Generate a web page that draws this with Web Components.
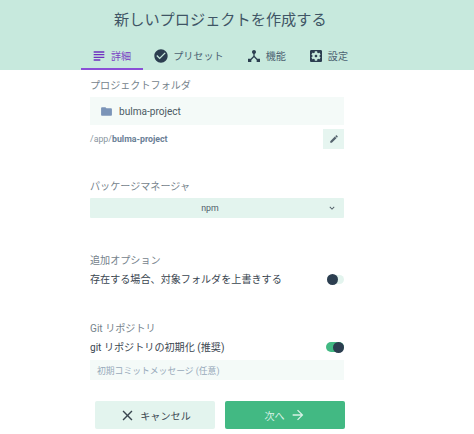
<!DOCTYPE html>
<html lang="ja">
<head>
<meta charset="utf-8">
<title>新しいプロジェクトを作成する</title>
<style>
  html, body { margin: 0; padding: 0; background: #fff; }
  body { font-family: Roboto, "Noto Sans CJK JP", sans-serif; color: #2c3e50; height: 434px; overflow: hidden; }
</style>
</head>
<body>
<create-view></create-view>
<script>
const ICONS = {
  subject: '<path d="M14 17H4v2h10v-2zm6-8H4v2h16V9zM4 15h16v-2H4v2zM4 5v2h16V5H4z"/>',
  check: '<path d="M12 2C6.48 2 2 6.48 2 12s4.48 10 10 10 10-4.48 10-10S17.52 2 12 2zm-2 15l-5-5 1.41-1.41L10 14.17l7.59-7.59L19 8l-9 9z"/>',
  tree: '<path d="M17 16l-4-4V8.82C14.16 8.4 15 7.3 15 6c0-1.66-1.34-3-3-3S9 4.34 9 6c0 1.3.84 2.4 2 2.82V12l-4 4H3v5h5v-3.05l4-4.2 4 4.2V21h5v-5h-4z"/>',
  settings: '<path d="M12 10c-1.1 0-2 .9-2 2s.9 2 2 2 2-.9 2-2-.9-2-2-2zm7-7H5c-1.11 0-2 .9-2 2v14c0 1.1.89 2 2 2h14c1.11 0 2-.9 2-2V5c0-1.1-.89-2-2-2zm-1.75 9c0 .23-.02.46-.05.68l1.48 1.16c.13.11.17.3.08.45l-1.4 2.42c-.09.15-.27.21-.43.15l-1.74-.7c-.36.28-.76.51-1.18.69l-.26 1.85c-.03.17-.18.3-.35.3h-2.8c-.17 0-.32-.13-.35-.29l-.26-1.85c-.43-.18-.82-.41-1.18-.69l-1.74.7c-.16.06-.34 0-.43-.15l-1.4-2.42c-.09-.15-.05-.34.08-.45l1.48-1.16c-.03-.23-.05-.46-.05-.69 0-.23.02-.46.05-.68l-1.48-1.16c-.13-.11-.17-.3-.08-.45l1.4-2.42c.09-.15.27-.21.43-.15l1.74.7c.36-.28.76-.51 1.18-.69l.26-1.85c.03-.17.18-.3.35-.3h2.8c.17 0 .32.13.35.29l.26 1.85c.43.18.82.41 1.18.69l1.74-.7c.16-.06.34 0 .43.15l1.4 2.42c.09.15.05.34-.08.45l-1.48 1.16c.03.23.05.46.05.69z"/>',
  folder: '<path d="M10 4H4c-1.1 0-2 .9-2 2v12c0 1.1.9 2 2 2h16c1.1 0 2-.9 2-2V8c0-1.1-.9-2-2-2h-8l-2-2z"/>',
  edit: '<path d="M3 17.25V21h3.75L17.81 9.94l-3.75-3.75L3 17.25zM20.71 7.04a1 1 0 0 0 0-1.41l-2.34-2.34a1 1 0 0 0-1.41 0l-1.83 1.83 3.75 3.75 1.83-1.83z"/>',
  chevron: '<path d="M7.41 8.59L12 13.17l4.59-4.58L18 10l-6 6-6-6z"/>',
  close: '<path d="M19 6.41L17.59 5 12 10.59 6.41 5 5 6.41 10.59 12 5 17.59 6.41 19 12 13.41 17.59 19 19 17.59 13.41 12z"/>',
  arrow: '<path d="M12 4l-1.41 1.41L16.17 11H4v2h12.17l-5.58 5.59L12 20l8-8z"/>'
};

class VIcon extends HTMLElement {
  connectedCallback() {
    const size = this.getAttribute('size') || 16;
    this.attachShadow({ mode: 'open' });
    this.shadowRoot.innerHTML = `
      <style>
        :host { display: inline-flex; flex: none; width: ${size}px; height: ${size}px; }
        svg { width: 100%; height: 100%; fill: currentColor; display: block; }
      </style>
      <svg viewBox="0 0 24 24">${ICONS[this.getAttribute('name')]}</svg>`;
  }
}
customElements.define('v-icon', VIcon);

class VTab extends HTMLElement {
  constructor() {
    super();
    this.attachShadow({ mode: 'open' });
    this.shadowRoot.innerHTML = `
      <style>
        :host {
          display: flex; align-items: center; gap: 4px;
          height: 30px; padding: 3px 12px 0 10px; box-sizing: border-box;
          font-size: 10.1px; color: #4c6272; white-space: nowrap;
          border-bottom: 2px solid transparent;
        }
        :host([selected]) { color: #7b3fc4; border-bottom-color: #8a4fd6; }
        ::slotted(v-icon) { color: #2c3e50; }
        :host([selected]) ::slotted(v-icon) { color: #6f2fc0; }
      </style>
      <slot></slot>`;
  }
}
customElements.define('v-tab', VTab);

class VHeader extends HTMLElement {
  constructor() {
    super();
    this.attachShadow({ mode: 'open' });
    this.shadowRoot.innerHTML = `
      <style>
        :host { display: block; height: 70px; background: #c7e9dd; box-sizing: border-box; }
        h1 { margin: 0; padding: 10px 0 0 114px; height: 40px; box-sizing: border-box; font-size: 15.2px; line-height: 20px; font-weight: 400; color: #3f5565; white-space: nowrap; }
        nav { display: flex; padding-left: 81px; }
      </style>
      <h1>新しいプロジェクトを作成する</h1>
      <nav><slot></slot></nav>`;
  }
}
customElements.define('v-header', VHeader);

class VField extends HTMLElement {
  constructor() {
    super();
    this.attachShadow({ mode: 'open' });
    this.shadowRoot.innerHTML = `
      <style>
        :host { display: block; }
        label { display: block; font-size: 10.1px; line-height: 16px; color: #76838c; white-space: nowrap; }
      </style>
      <label></label>
      <slot></slot>`;
  }
  connectedCallback() {
    this.shadowRoot.querySelector('label').textContent = this.getAttribute('label');
  }
}
customElements.define('v-field', VField);

class VInput extends HTMLElement {
  constructor() {
    super();
    this.attachShadow({ mode: 'open' });
    this.shadowRoot.innerHTML = `
      <style>
        :host {
          display: flex; align-items: center; gap: 6px; box-sizing: border-box;
          height: 28px; padding: 0 10px;
          background: #f4faf8; font-size: 10.1px; color: #4c5a64;
        }
        :host([small]) { height: 20px; padding: 0 7px; font-size: 8.8px; color: #98aabb; }
        ::slotted(v-icon) { color: #7b94b8; }
      </style>
      <slot></slot>`;
  }
}
customElements.define('v-input', VInput);

class VSelect extends HTMLElement {
  constructor() {
    super();
    this.attachShadow({ mode: 'open' });
    this.shadowRoot.innerHTML = `
      <style>
        :host {
          display: flex; align-items: center; justify-content: center; position: relative;
          height: 20px; padding-right: 14px; box-sizing: border-box;
          background: #e3f4ee; border-radius: 1px;
          font-size: 8.8px; color: #51606b;
        }
        v-icon { position: absolute; right: 7px; top: 5px; color: #4c5a64; }
      </style>
      <slot></slot>
      <v-icon name="chevron" size="10"></v-icon>`;
  }
}
customElements.define('v-select', VSelect);

class VSwitch extends HTMLElement {
  constructor() {
    super();
    this.attachShadow({ mode: 'open' });
    this.shadowRoot.innerHTML = `
      <style>
        :host {
          display: flex; align-items: center; flex: none; align-self: center;
          width: 17px; height: 9px; border-radius: 5px; background: #e3f4ee;
        }
        :host([on]) { width: 18px; height: 10px; background: #42b983; justify-content: flex-end; }
        i { width: 11px; height: 11px; border-radius: 50%; background: #2c3e50; display: block; flex: none; }
      </style>
      <i></i>`;
  }
}
customElements.define('v-switch', VSwitch);

class VRow extends HTMLElement {
  constructor() {
    super();
    this.attachShadow({ mode: 'open' });
    this.shadowRoot.innerHTML = `
      <style>
        :host { display: flex; align-items: flex-start; justify-content: space-between; height: 20px; font-size: 10.1px; line-height: 22px; color: #3a4650; white-space: nowrap; }
      </style>
      <slot></slot>`;
  }
}
customElements.define('v-row', VRow);

class VButton extends HTMLElement {
  constructor() {
    super();
    this.attachShadow({ mode: 'open' });
    this.shadowRoot.innerHTML = `
      <style>
        :host {
          display: flex; align-items: center; justify-content: center; gap: 4px; box-sizing: border-box;
          width: 120px; height: 28px; border-radius: 2px;
          background: #e3f4ee; color: #3a4650; font-size: 10.1px;
        }
        :host([primary]) { gap: 5px; background: #42b983; color: #d7f1e6; }
      </style>
      <slot></slot>`;
  }
}
customElements.define('v-button', VButton);

class CreateView extends HTMLElement {
  constructor() {
    super();
    this.attachShadow({ mode: 'open' });
    this.shadowRoot.innerHTML = `
      <style>
        :host { display: block; }
        main { width: 254px; margin-left: 90px; padding-top: 8px; }
        .path { display: flex; align-items: center; justify-content: space-between; height: 20px; margin-top: 4px; font-size: 8.8px; color: #8a96a0; }
        .path b { color: #6a7f96; font-weight: 700; }
        .edit { display: flex; align-items: center; justify-content: center; width: 21px; height: 20px; background: #e6f5f0; color: #55636e; }
        .pm { margin-top: 30px; }
        .pm v-select { margin-top: 3px; }
        .options { margin-top: 35px; }
        .git { margin-top: 32px; }
        .git v-input { margin-top: 3px; }
        .actions { display: flex; gap: 10px; margin: 21px 0 0 5px; width: 251px; }
      </style>
      <v-header>
        <v-tab selected><v-icon name="subject" size="16"></v-icon>詳細</v-tab>
        <v-tab><v-icon name="check" size="16"></v-icon>プリセット</v-tab>
        <v-tab><v-icon name="tree" size="16"></v-icon>機能</v-tab>
        <v-tab><v-icon name="settings" size="16"></v-icon>設定</v-tab>
      </v-header>
      <main>
        <v-field label="プロジェクトフォルダ">
          <v-input style="margin-top:3px"><v-icon name="folder" size="13"></v-icon>bulma-project</v-input>
        </v-field>
        <div class="path"><span>/app/<b>bulma-project</b></span><span class="edit"><v-icon name="edit" size="10"></v-icon></span></div>
        <v-field class="pm" label="パッケージマネージャ">
          <v-select>npm</v-select>
        </v-field>
        <v-field class="options" label="追加オプション">
          <v-row>存在する場合、対象フォルダを上書きする<v-switch></v-switch></v-row>
        </v-field>
        <v-field class="git" label="Git リポジトリ">
          <v-row>git リポジトリの初期化 (推奨)<v-switch on></v-switch></v-row>
          <v-input small>初期コミットメッセージ (任意)</v-input>
        </v-field>
        <div class="actions">
          <v-button><v-icon name="close" size="17"></v-icon>キャンセル</v-button>
          <v-button primary>次へ<v-icon name="arrow" size="16"></v-icon></v-button>
        </div>
      </main>`;
  }
}
customElements.define('create-view', CreateView);
</script>
</body>
</html>
